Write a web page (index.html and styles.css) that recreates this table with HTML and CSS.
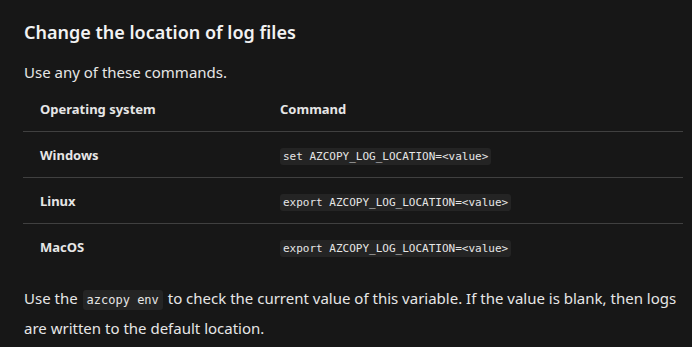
FILE: index.html
```html
<!DOCTYPE html>
<html lang="en">
<head>
  <meta charset="UTF-8" />
  <title>Change the location of log files</title>
  <link rel="stylesheet" href="styles.css">
</head>
<body>
  <div class="content">
    <h2 class="section-title">Change the location of log files</h2>
    <p class="lead">Use any of these commands.</p>

    <table class="cmd-table">
      <thead>
        <tr>
          <th class="col-os">Operating system</th>
          <th>Command</th>
        </tr>
      </thead>
      <tbody>
        <tr>
          <td class="os">Windows</td>
          <td><code>set AZCOPY_LOG_LOCATION=&lt;value&gt;</code></td>
        </tr>
        <tr>
          <td class="os">Linux</td>
          <td><code>export AZCOPY_LOG_LOCATION=&lt;value&gt;</code></td>
        </tr>
        <tr>
          <td class="os">MacOS</td>
          <td><code>export AZCOPY_LOG_LOCATION=&lt;value&gt;</code></td>
        </tr>
      </tbody>
    </table>

    <p class="note">Use the <code>azcopy env</code> to check the current value of this variable. If the value is blank, then logs are written to the default location.</p>
  </div>
</body>
</html>
```

FILE: styles.css
```css
body {
  margin: 0;
  padding: 0;
  background: #171717;
  color: #e6e6e6;
  font-family: 'Noto Sans', 'Open Sans', sans-serif;
}

.content {
  padding: 15px 9px 0 23px;
}

.section-title {
  margin: 0 0 0 1px;
  font-size: 18px;
  font-weight: 600;
  line-height: 34px;
  color: #f2f2f2;
}

.lead {
  margin: 11px 0 0 1px;
  font-size: 15px;
  line-height: 24px;
}

.cmd-table {
  width: 100%;
  table-layout: fixed;
  border-collapse: collapse;
  margin-top: 2px;
  font-size: 13px;
}

.cmd-table th,
.cmd-table td {
  text-align: left;
  padding: 0 16px 0 17px;
  height: 45px;
  vertical-align: middle;
}

.cmd-table th {
  font-weight: 700;
}

.col-os {
  width: 208px;
}

.cmd-table tbody td {
  border-top: 1px solid #404040;
}

.cmd-table td + td,
.cmd-table th + th {
  padding-left: 16px;
}

.os {
  font-weight: 700;
}

code {
  font-family: 'DejaVu Sans Mono', 'Liberation Mono', monospace;
  background: #242424;
  border-radius: 3px;
  padding: 2px 3px;
}

.cmd-table code {
  font-size: 11px;
}

.note {
  margin: 15px 0 0 1px;
  font-size: 15px;
  line-height: 28px;
}

.note code {
  font-size: 12px;
  padding: 3px 4px;
  margin: 0 1px;
}
```
